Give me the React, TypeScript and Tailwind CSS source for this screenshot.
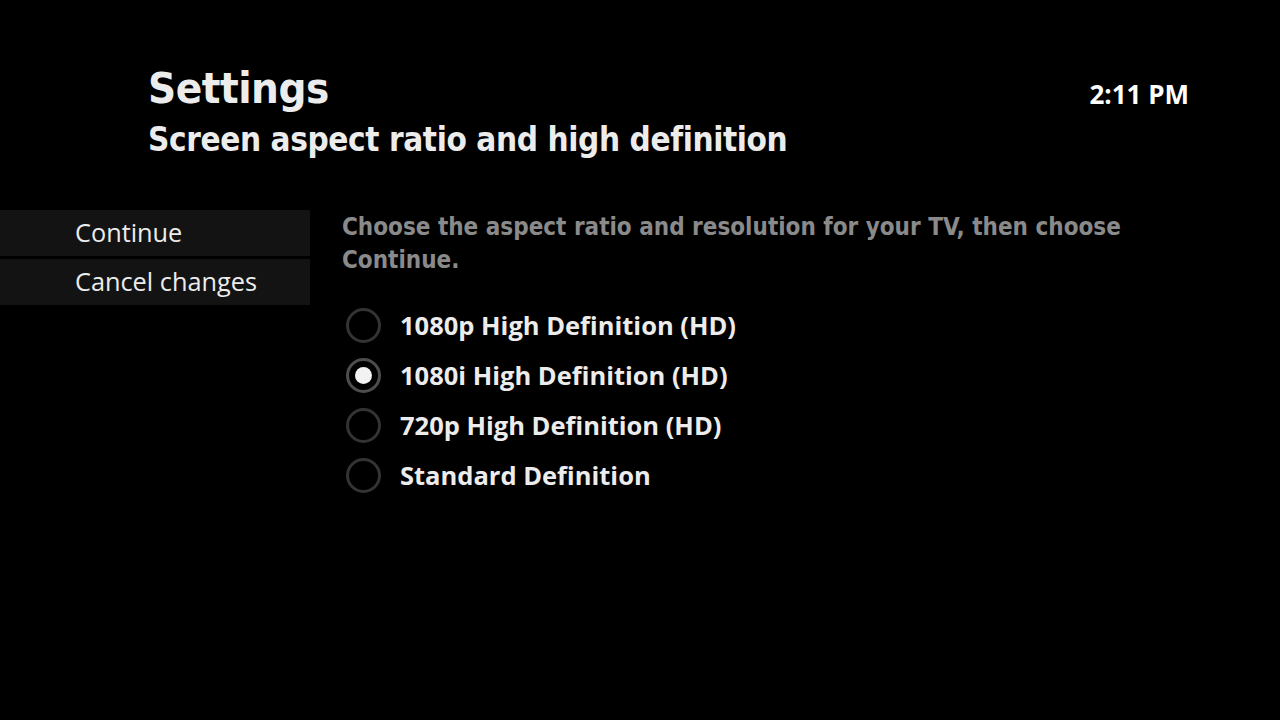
import React from "react";

const options = [
  { label: "1080p High Definition (HD)", selected: false },
  { label: "1080i High Definition (HD)", selected: true },
  { label: "720p High Definition (HD)", selected: false },
  { label: "Standard Definition", selected: false },
];

const cond = { fontFamily: '"DejaVu Sans Condensed", "DejaVu Sans", sans-serif', fontStretch: "condensed" as const };

export default function App() {
  return (
    <div className="w-[1280px] h-[720px] bg-black text-[#ececec] overflow-hidden relative" style={{ fontFamily: '"Open Sans", sans-serif' }}>
      <div className="flex justify-between pl-[148px] pr-[91px] pt-[60px]">
        <div className="flex flex-col">
          <div className="text-[43.5px] font-bold leading-[56px] tracking-[-0.5px]" style={cond}>Settings</div>
          <div className="text-[33px] font-bold leading-[42px] tracking-[-0.4px] mt-[3px]" style={cond}>Screen aspect ratio and high definition</div>
        </div>
        <div className="text-[26px] font-bold mt-[15px] text-white">2:11 PM</div>
      </div>
      <div className="flex mt-[49px]">
        <div className="w-[310px] flex flex-col gap-[3px]">
          <div className="h-[46px] bg-[#131313] flex items-center pl-[75px] text-[25.3px]">Continue</div>
          <div className="h-[46px] bg-[#131313] flex items-center pl-[75px] text-[25.3px]">Cancel changes</div>
        </div>
        <div className="pl-[32px] flex flex-col">
          <div className="text-[24px] font-bold text-[#8a8a8a] leading-[33px] w-[800px] mt-[1px]" style={cond}>
            Choose the aspect ratio and resolution for your TV, then choose Continue.
          </div>
          <div className="flex flex-col mt-[23px] pl-[4px]">
            {options.map((o) => (
              <div key={o.label} className="h-[50px] flex items-center">
                <div className={`w-[35px] h-[35px] rounded-full border-[3px] flex items-center justify-center ${o.selected ? "border-[#4d4d4d]" : "border-[#333333]"}`}>
                  {o.selected && <div className="w-[17px] h-[17px] rounded-full bg-[#f2f2f2]" />}
                </div>
                <div className="ml-[19px] text-[25.5px] font-bold text-[#ececec]">{o.label}</div>
              </div>
            ))}
          </div>
        </div>
      </div>
    </div>
  );
}
